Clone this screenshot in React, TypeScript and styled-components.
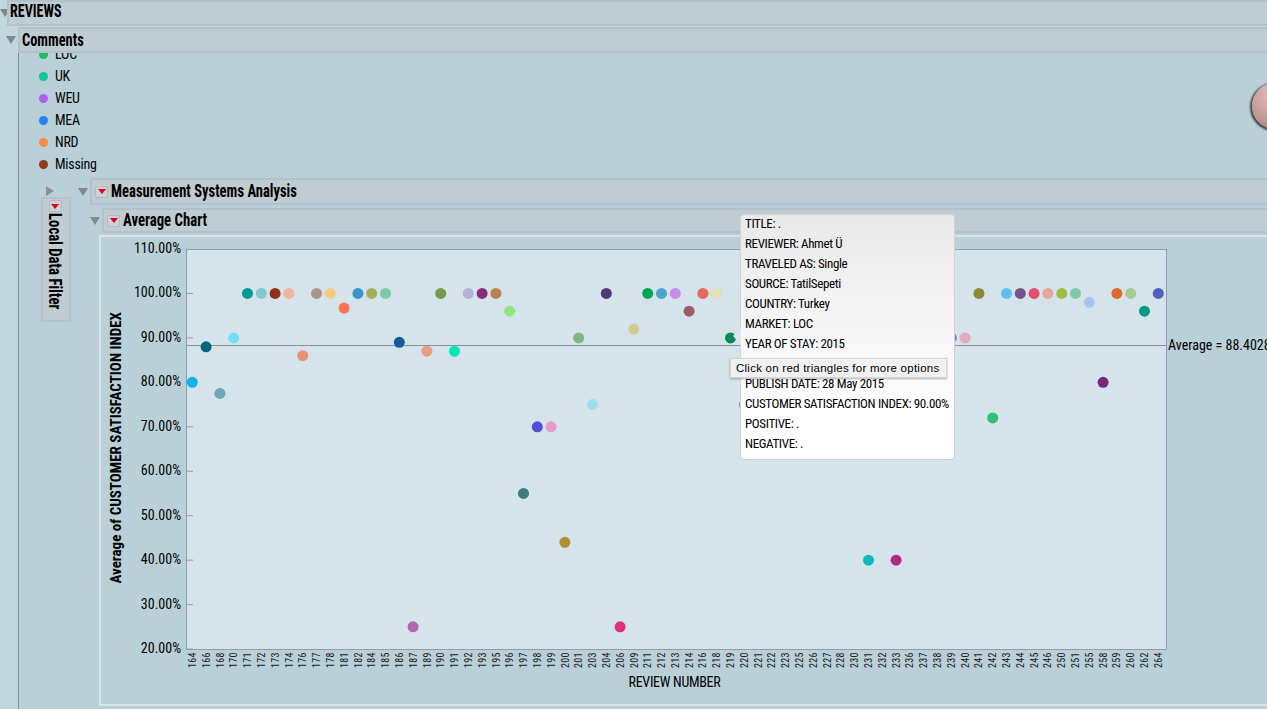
import React from "react";
import styled, { createGlobalStyle } from "styled-components";

const narrow = `"Liberation Sans Narrow", "Roboto Condensed", "DejaVu Sans Condensed", "Liberation Sans", sans-serif`;

const Global = createGlobalStyle`
  html, body { margin: 0; padding: 0; background: #c1d6df; }
  * { box-sizing: border-box; }
`;

const Page = styled.div`
  position: relative;
  width: 1267px;
  height: 709px;
  overflow: hidden;
  background: #c1d6df;
  font-family: ${narrow};
  color: #000;
`;

const Row = styled.div<{ $top?: number }>`
  display: flex;
  align-items: center;
  margin-top: ${(p) => p.$top ?? 0}px;
`;

const Tri = styled.span<{ $right?: boolean }>`
  flex: none;
  width: 0;
  height: 0;
  ${(p) =>
    p.$right
      ? `border-top: 5px solid transparent; border-bottom: 5px solid transparent; border-left: 8px solid #8b9094;`
      : `border-left: 5px solid transparent; border-right: 5px solid transparent; border-top: 8px solid #83888c;`}
`;

const Slot = styled.span<{ $w: number; $pad: number }>`
  flex: none;
  display: flex;
  width: ${(p) => p.$w}px;
  padding-left: ${(p) => p.$pad}px;
`;

const Bar = styled.div<{ $h: number; $pad: number }>`
  flex: 1;
  display: flex;
  align-items: center;
  gap: 3px;
  height: ${(p) => p.$h}px;
  padding-left: ${(p) => p.$pad}px;
  background: #bfcdd2;
  border: 2px solid #b2c2ca;
  border-right: 0;
  white-space: nowrap;
`;

const BarTitle = styled.span<{ $sx: number; $lift?: number }>`
  display: inline-block;
  margin-top: -${(p) => p.$lift ?? 2}px;
  font-size: 18px;
  font-weight: 700;
  transform: scaleX(${(p) => p.$sx});
  transform-origin: left center;
`;

const RedButton = styled.span`
  flex: none;
  display: flex;
  align-items: center;
  justify-content: center;
  width: 13px;
  height: 12px;
  border: 1px solid #b3b9bd;
  border-radius: 2px;
  background: #cbd3d6;
  &::after {
    content: "";
    border-left: 4.5px solid transparent;
    border-right: 4.5px solid transparent;
    border-top: 5px solid #e0001b;
  }
`;

const Body = styled.div`
  position: relative;
  margin-left: 18px;
  height: 657px;
  overflow: hidden;
  border-left: 1px solid #83898e;
  background: #b9d0d8;
`;

const Legend = styled.ul`
  list-style: none;
  margin: -10px 0 3px;
  padding: 0 0 0 20px;
`;

const LegendItem = styled.li`
  display: flex;
  align-items: center;
  gap: 7px;
  height: 22px;
  font-size: 14px;
  letter-spacing: -0.25px;
`;

const LegendDot = styled.span<{ $c: string }>`
  flex: none;
  width: 9px;
  height: 9px;
  border-radius: 50%;
  background: ${(p) => p.$c};
`;

const Ball = styled.div`
  position: absolute;
  left: 1233px;
  top: 30px;
  width: 46px;
  height: 46px;
  border-radius: 50%;
  background: radial-gradient(circle at 45% 25%, #e6bcb9 0%, #c89c99 50%, #ab7f7c 100%);
  box-shadow: -1px 1px 2px 1px #3f4648;
`;

const Lower = styled.div`
  display: flex;
`;

const FilterCol = styled.div`
  flex: none;
  width: 59px;
  padding: 8px 0 0 22px;
  display: flex;
  flex-direction: column;
`;

const FilterArrow = styled.div`
  display: flex;
  padding-left: 5px;
  height: 11px;
`;

const FilterBox = styled.div`
  display: flex;
  flex-direction: column;
  align-items: center;
  gap: 1px;
  width: 30px;
  height: 125px;
  padding: 1px 2px 0 0;
  background: #bfcdd2;
  border: 2px solid #b2c2ca;
`;

const FilterText = styled.span`
  writing-mode: vertical-rl;
  white-space: nowrap;
  font-size: 18px;
  font-weight: 700;
  transform: scaleY(0.82);
  transform-origin: center top;
`;

const Main = styled.div`
  flex: 1;
  min-width: 0;
`;

const Frame = styled.div`
  margin: 2px 0 0 21px;
  height: 471px;
  padding-top: 12px;
  border: 2px solid #dbe4e8;
  border-right: 0;
  display: grid;
  grid-template-columns: 30px 50px 5px 981px 1fr;
  grid-template-rows: 401px 18px 30px;
`;

const YTitle = styled.div`
  grid-column: 1;
  grid-row: 1;
  display: flex;
  align-items: center;
  justify-content: center;
  padding-bottom: 3px;
  font-size: 15px;
  font-weight: 700;
`;

const YTitleText = styled.span`
  writing-mode: vertical-rl;
  transform: rotate(180deg);
  white-space: nowrap;
`;

const YTicks = styled.div`
  grid-column: 2;
  grid-row: 1;
  margin: -22px 0;
  display: flex;
  flex-direction: column;
`;

const YTick = styled.div`
  height: 44.44px;
  line-height: 42px;
  text-align: right;
  font-size: 14px;
`;

const Plot = styled.div`
  position: relative;
  grid-column: 4;
  grid-row: 1;
  border: 1px solid #8f9bb5;
  background: #d5e3ea;
`;

const PlotSvg = styled.svg`
  display: block;
  width: 979px;
  height: 399px;
`;

const AverageLabel = styled.span`
  position: absolute;
  left: calc(100% + 2px);
  top: 87px;
  font-size: 14px;
  white-space: nowrap;
`;

const XTicks = styled.div`
  grid-column: 4;
  grid-row: 2;
  display: flex;
  padding-top: 2px;
`;

const XTick = styled.span`
  flex: none;
  width: 13.8px;
  display: flex;
  justify-content: center;
  font-size: 10px;
  letter-spacing: 0.3px;
  line-height: 13.8px;
  color: #1a1a1a;
`;

const XTickText = styled.span`
  writing-mode: vertical-rl;
  transform: rotate(180deg);
`;

const XTitle = styled.div`
  grid-column: 4;
  grid-row: 3;
  text-align: center;
  padding: 6px 4px 0 0;
  font-size: 14px;
  letter-spacing: -0.3px;
`;

const Tooltip = styled.div`
  position: absolute;
  left: 740px;
  top: 214px;
  width: 215px;
  height: 246px;
  padding: 0 0 0 4px;
  border: 1px solid #cfd3d6;
  border-radius: 4px;
  background: linear-gradient(#e9e9e9, #ffffff 80%);
  font-size: 13px;
  letter-spacing: -0.36px;
  &::before {
    content: "";
    position: absolute;
    left: -8px;
    top: 112px;
    border-top: 9px solid transparent;
    border-bottom: 9px solid transparent;
    border-right: 8px solid #dfe6e9;
  }
`;

const TipLine = styled.div`
  height: 20px;
  line-height: 18px;
  white-space: nowrap;
`;

const Hint = styled.div`
  position: absolute;
  left: 730px;
  top: 358px;
  width: 217px;
  height: 20px;
  padding-left: 5px;
  line-height: 19px;
  border: 1px solid #d4d4d4;
  background: #f1f1f1;
  box-shadow: 0 1px 2px rgba(0, 0, 0, 0.3);
  font-family: "Liberation Sans", sans-serif;
  font-size: 11.5px;
  letter-spacing: 0.25px;
  white-space: nowrap;
`;

const labels = [164,166,168,170,171,172,173,174,176,177,178,181,182,184,185,186,187,189,190,191,192,193,195,196,197,198,199,200,201,203,204,206,209,211,212,213,214,216,218,219,220,221,222,223,225,226,227,228,230,231,232,233,236,237,238,239,240,241,242,243,244,245,246,250,251,255,258,259,260,262,264];

const points: [number, number, string][] = [
  [0,80,"#0fb5e8"],[1,88,"#00657d"],[2,77.5,"#6fa5b8"],[3,90,"#74dcf8"],[4,100,"#009b96"],[5,100,"#7fc8cd"],[6,100,"#8f301d"],[7,100,"#f3b3a1"],[8,86,"#ea9079"],[9,100,"#ad9488"],[10,100,"#f0cb80"],[11,96.7,"#ff7059"],[12,100,"#3d90c8"],[13,100,"#a2b05d"],[14,100,"#79cba5"],[15,89,"#135b99"],[16,25,"#af6aaf"],[17,87,"#e89c82"],[18,100,"#72994e"],[19,87,"#00e6b4"],[20,100,"#b0b4d4"],[21,100,"#872c7e"],[22,100,"#b88250"],[23,96,"#8ce879"],[24,55,"#3d7b7b"],[25,70,"#4f4fdc"],[26,70,"#e89cc8"],[27,44,"#b48c32"],[28,90,"#80b685"],[29,75,"#9be0e6"],[30,100,"#4f3a78"],[31,25,"#e0307a"],[32,92,"#d2c990"],[33,100,"#00a652"],[34,100,"#4ba6cf"],[35,100,"#c88cea"],[36,96,"#a05a6a"],[37,100,"#e8685f"],[38,100,"#dde3b4"],[39,90,"#008a5a"],[40,75,"#7d9cc0"],[49,40,"#0fb8c0"],[51,40,"#b02a82"],[55,90,"#9070e0"],[56,90,"#e4a8c0"],[57,100,"#8c8a34"],[58,72,"#30c070"],[59,100,"#5bbff0"],[60,100,"#75538a"],[61,100,"#e34e6b"],[62,100,"#e3a79f"],[63,100,"#9dc043"],[64,100,"#80c8aa"],[65,98,"#a6c4ee"],[66,80,"#732a78"],[67,100,"#e0692e"],[68,100,"#a8c896"],[69,96,"#009a80"],[70,100,"#5060c0"],
];

const yTicks = [110,100,90,80,70,60,50,40,30,20];
const tickY = (v: number) => (110 - v) * 4.445;
const dotY = (v: number) => tickY(v) - 1;
const xOf = (i: number) => 13.8 * (i + 0.5) - 1.6;

const legend: [string, string][] = [
  ["LOC", "#1dbf5c"],["UK", "#0dc69a"],["WEU", "#b25ff0"],["MEA", "#2f80ee"],["NRD", "#f58b45"],["Missing", "#8f3b22"],
];

const tip = ["TITLE: .","REVIEWER: Ahmet Ü","TRAVELED AS: Single","SOURCE: TatilSepeti","COUNTRY: Turkey","MARKET: LOC","YEAR OF STAY: 2015","","PUBLISH DATE: 28 May 2015","CUSTOMER SATISFACTION INDEX: 90.00%","POSITIVE: .","NEGATIVE: ."];

export default function App() {
  return (
    <Page>
      <Global />
      <Row>
        <Slot $w={7} $pad={0}><Tri /></Slot>
        <Bar $h={26} $pad={1}><BarTitle $sx={0.78} $lift={5}>REVIEWS</BarTitle></Bar>
      </Row>
      <Row $top={1}>
        <Slot $w={18} $pad={6}><Tri /></Slot>
        <Bar $h={26} $pad={2}><BarTitle $sx={0.8}>Comments</BarTitle></Bar>
      </Row>
      <Body>
        <Ball />
        <Legend>
          {legend.map(([name, c]) => (
            <LegendItem key={name}><LegendDot $c={c} />{name}</LegendItem>
          ))}
        </Legend>
        <Lower>
          <FilterCol>
            <FilterArrow><Tri $right /></FilterArrow>
            <FilterBox>
              <RedButton />
              <FilterText>Local Data Filter</FilterText>
            </FilterBox>
          </FilterCol>
          <Main>
            <Row>
              <Slot $w={12} $pad={0}><Tri /></Slot>
              <Bar $h={27} $pad={3}><RedButton /><BarTitle $sx={0.81}>Measurement Systems Analysis</BarTitle></Bar>
            </Row>
            <Row $top={3}>
              <Slot $w={24} $pad={12}><Tri /></Slot>
              <Bar $h={25} $pad={3}><RedButton /><BarTitle $sx={0.82}>Average Chart</BarTitle></Bar>
            </Row>
            <Frame>
              <YTitle><YTitleText>Average of CUSTOMER SATISFACTION INDEX</YTitleText></YTitle>
              <YTicks>
                {yTicks.map((t) => <YTick key={t}>{t}.00%</YTick>)}
              </YTicks>
              <Plot>
                <PlotSvg viewBox="0 0 979 399">
                  {yTicks.map((t) => (
                    <line key={t} x1={0} x2={6} y1={tickY(t) - 1} y2={tickY(t) - 1} stroke="#8f9bb5" strokeWidth={1} />
                  ))}
                  <line x1={0} x2={979} y1={95.5} y2={95.5} stroke="#87929a" strokeWidth={1} />
                  {points.map(([i, v, c]) => (
                    <circle key={i} cx={xOf(i)} cy={dotY(v)} r={5.5} fill={c} />
                  ))}
                </PlotSvg>
                <AverageLabel>Average = 88.4028%</AverageLabel>
              </Plot>
              <XTicks>
                {labels.map((l) => <XTick key={l}><XTickText>{l}</XTickText></XTick>)}
              </XTicks>
              <XTitle>REVIEW NUMBER</XTitle>
            </Frame>
          </Main>
        </Lower>
      </Body>
      <Tooltip>
        {tip.map((t, i) => <TipLine key={i}>{t}</TipLine>)}
      </Tooltip>
      <Hint>Click on red triangles for more options</Hint>
    </Page>
  );
}
